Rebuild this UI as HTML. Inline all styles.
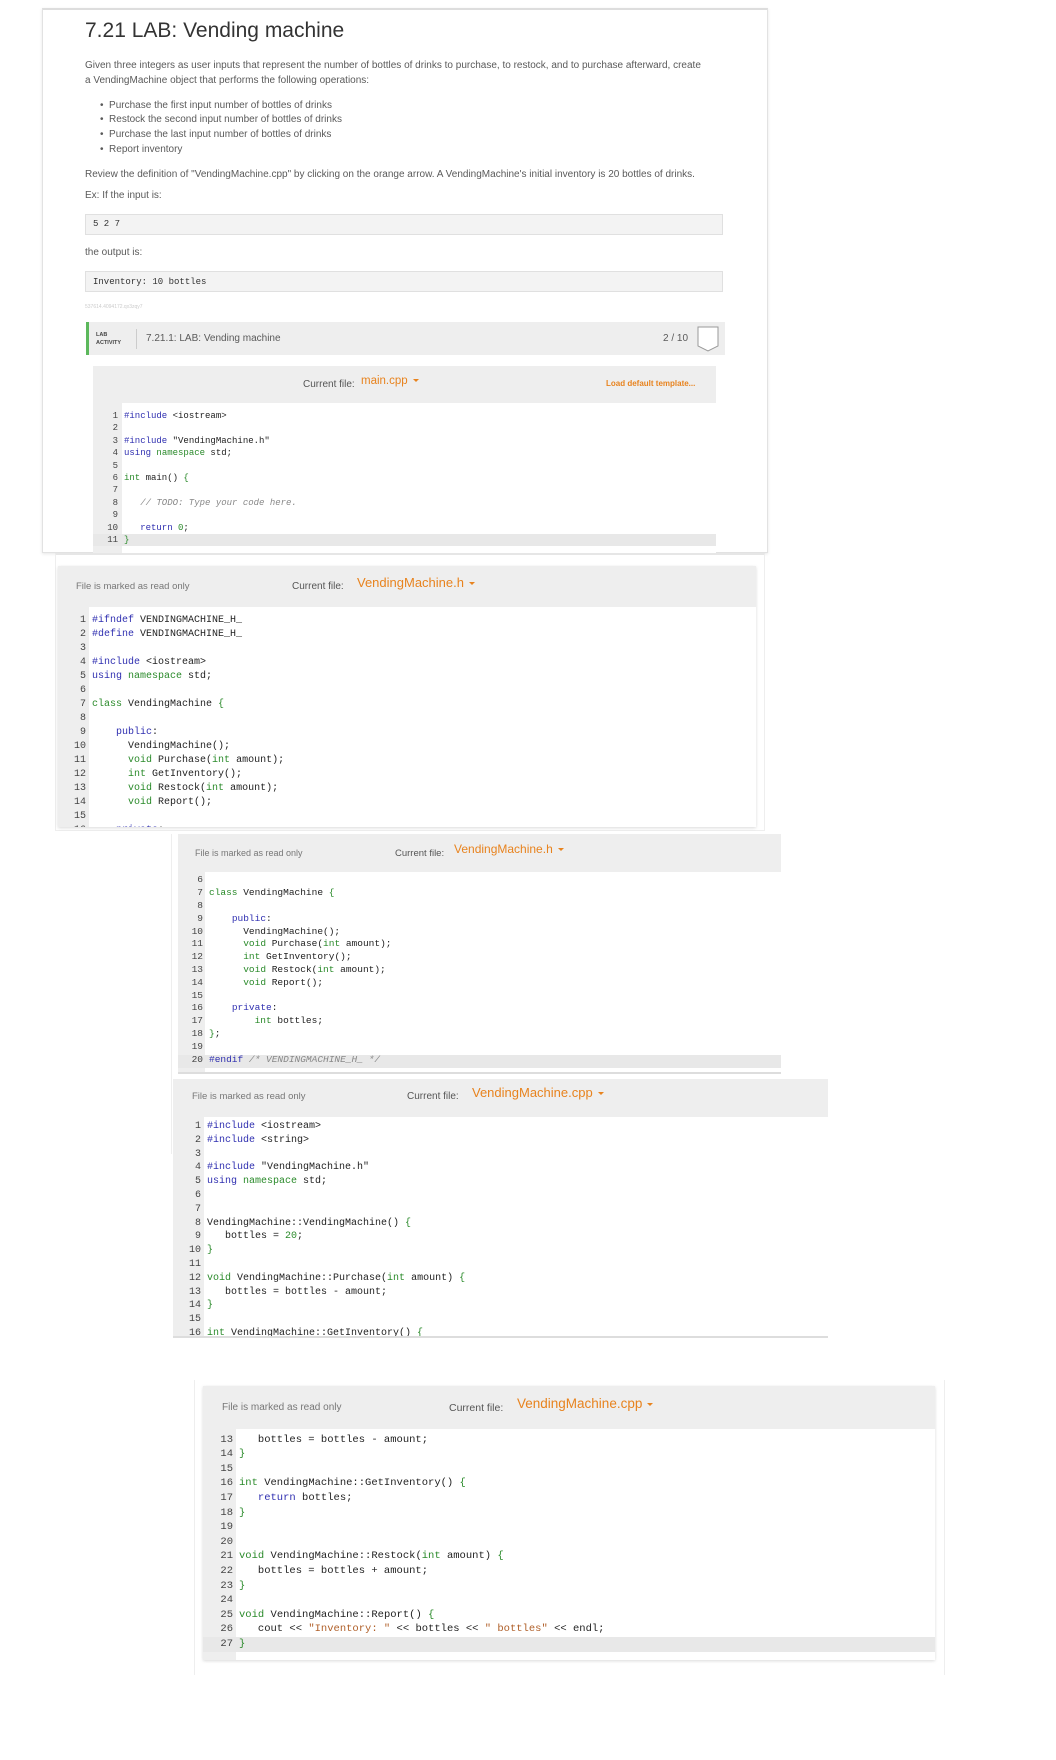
<!DOCTYPE html>
<html><head><meta charset="utf-8">
<style>
*{margin:0;padding:0;box-sizing:border-box}
body{width:1056px;height:1760px;background:#fff;position:relative;font-family:"Liberation Sans",sans-serif;color:#555;overflow:hidden}
.a{position:absolute}
.p{position:absolute;font-size:10px;white-space:nowrap;color:#5a5a5a}
.ed{position:absolute;overflow:hidden;background:#fff}
.hd{position:absolute;left:0;top:0;right:0;background:#eeeeee;z-index:2}
.hd span{position:absolute;white-space:nowrap}
.ro{font-size:9.5px;color:#777}
.cf{font-size:10px;color:#555}
.or{color:#e8831e;font-size:13px}
.car{display:inline-block;width:0;height:0;border-left:3px solid transparent;border-right:3px solid transparent;border-top:3px solid #e8831e;margin-left:5px;vertical-align:middle}
.gut{position:absolute;left:0;top:0;bottom:0;background:#eeeeee}
.ln{position:absolute;left:0;white-space:pre;font-family:"Liberation Mono",monospace;color:#222}
.num{position:absolute;left:0;text-align:right;color:#444;font-family:"Liberation Mono",monospace;white-space:pre}
.k{color:#2f2fb0}.t{color:#2a8a2a}.g{color:#2a8a2a}.s{color:#b0602a}.c{color:#888;font-style:italic}
.hl{position:absolute;left:0;right:0;background:#e8e8e8}
</style></head><body>

<!-- panel 1 -->
<div class="a" style="left:42px;top:8px;width:726px;height:545px;border:1px solid #e2e2e2;border-top:2px solid #ddd;box-shadow:0 1px 3px rgba(0,0,0,.1)"></div>
<div class="a" style="left:85px;top:19px;font-size:21px;color:#333;white-space:nowrap">7.21 LAB: Vending machine</div>
<div class="p" style="left:85px;top:60px">Given three integers as user inputs that represent the number of bottles of drinks to purchase, to restock, and to purchase afterward, create</div>
<div class="p" style="left:85px;top:75px">a VendingMachine object that performs the following operations:</div>
<div class="p" style="left:100px;top:100px">•&nbsp;&nbsp;Purchase the first input number of bottles of drinks</div>
<div class="p" style="left:100px;top:114px">•&nbsp;&nbsp;Restock the second input number of bottles of drinks</div>
<div class="p" style="left:100px;top:129px">•&nbsp;&nbsp;Purchase the last input number of bottles of drinks</div>
<div class="p" style="left:100px;top:144px">•&nbsp;&nbsp;Report inventory</div>
<div class="p" style="left:85px;top:169px">Review the definition of "VendingMachine.cpp" by clicking on the orange arrow. A VendingMachine's initial inventory is 20 bottles of drinks.</div>
<div class="p" style="left:85px;top:190px">Ex: If the input is:</div>
<div class="a" style="left:85px;top:214px;width:638px;height:21px;background:#f3f3f3;border:1px solid #e0e0e0;font-family:'Liberation Mono',monospace;font-size:9px;color:#333;padding:4px 7px">5 2 7</div>
<div class="p" style="left:85px;top:247px">the output is:</div>
<div class="a" style="left:85px;top:271px;width:638px;height:21px;background:#f3f3f3;border:1px solid #e0e0e0;font-family:'Liberation Mono',monospace;font-size:9px;color:#333;padding:5px 7px">Inventory: 10 bottles</div>
<div class="p" style="left:85px;top:304px;font-size:5px;color:#ccc">537614.4094172.qx3zqy7</div>

<div class="a" style="left:86px;top:322px;width:639px;height:33px;background:#eeeeee;border-left:3px solid #5cb85c"></div>
<div class="a" style="left:96px;top:331px;font-size:5.5px;font-weight:bold;color:#444;line-height:8px">LAB<br>ACTIVITY</div>
<div class="a" style="left:136px;top:329px;width:1px;height:20px;background:#ccc"></div>
<div class="p" style="left:146px;top:333px;font-size:10px">7.21.1: LAB: Vending machine</div>
<div class="p" style="left:663px;top:333px;font-size:10px">2 / 10</div>
<svg class="a" style="left:697px;top:326px" width="22" height="26"><path d="M1 1H21V20L11 25L1 20Z" fill="#fff" stroke="#999" stroke-width="1"/></svg>

<div class="ed" style="left:93px;top:366px;width:623px;height:187px;background:#fff">
 <div class="hd" style="height:37px">
  <span class="cf" style="left:210px;top:13px">Current file:</span>
  <span class="or" style="left:268px;top:9px;font-size:11.5px">main.cpp<i class="car"></i></span>
  <span style="left:513px;top:13px;font-size:8px;font-weight:bold;color:#e8831e">Load default template...</span>
 </div>
 <div class="gut" style="width:29px"></div>
 <div class="hl" style="top:168px;height:12.4px"></div>
 <div class="num" style="top:44px;width:25px;font-size:9px;line-height:12.4px">1
2
3
4
5
6
7
8
9
10
11</div>
 <div class="ln" style="left:31px;top:44px;font-size:9px;line-height:12.4px"><span class="k">#include</span> &lt;iostream&gt;

<span class="k">#include</span> "VendingMachine.h"
<span class="k">using</span> <span class="t">namespace</span> std;

<span class="t">int</span> main() <span class="g">{</span>

   <span class="c">// TODO: Type your code here.</span>

   <span class="k">return</span> <span class="g">0</span>;
<span class="g">}</span></div>
</div>

<!-- panel 2 -->
<div class="a" style="left:55px;top:553px;width:710px;height:278px;border:1px solid #eee;border-top:2px solid #e6e6e6;background:#fff"></div>
<div class="ed" style="left:58px;top:566px;width:698px;height:261px;box-shadow:0 1px 3px rgba(0,0,0,.15)">
 <div class="hd" style="height:41px">
  <span class="ro" style="left:18px;top:15px">File is marked as read only</span>
  <span class="cf" style="left:234px;top:15px">Current file:</span>
  <span class="or" style="left:299px;top:9px">VendingMachine.h<i class="car"></i></span>
 </div>
 <div class="gut" style="width:31px"></div>
 <div class="num" style="top:48px;width:28px;font-size:10px;line-height:14px">1
2
3
4
5
6
7
8
9
10
11
12
13
14
15
16</div>
 <div class="ln" style="left:34px;top:48px;font-size:10px;line-height:14px"><span class="k">#ifndef</span> VENDINGMACHINE_H_
<span class="k">#define</span> VENDINGMACHINE_H_

<span class="k">#include</span> &lt;iostream&gt;
<span class="k">using</span> <span class="t">namespace</span> std;

<span class="t">class</span> VendingMachine <span class="g">{</span>

    <span class="k">public</span>:
      VendingMachine();
      <span class="t">void</span> Purchase(<span class="t">int</span> amount);
      <span class="t">int</span> GetInventory();
      <span class="t">void</span> Restock(<span class="t">int</span> amount);
      <span class="t">void</span> Report();

    <span class="k">private</span>:</div>
</div>

<!-- panel 3 -->
<div class="a" style="left:171px;top:834px;width:1px;height:320px;background:#eee"></div>
<div class="ed" style="left:178px;top:834px;width:603px;height:240px;border-bottom:2px solid #ddd">
 <div class="hd" style="height:38px">
  <span class="ro" style="left:17px;top:14px;font-size:9px">File is marked as read only</span>
  <span class="cf" style="left:217px;top:14px;font-size:9.5px">Current file:</span>
  <span class="or" style="left:276px;top:8px;font-size:12px">VendingMachine.h<i class="car"></i></span>
 </div>
 <div class="gut" style="width:27px"></div>
 <div class="hl" style="top:220.8px;height:12.8px"></div>
 <div class="num" style="top:27.6px;width:25px;font-size:9.5px;line-height:12.8px">5
6
7
8
9
10
11
12
13
14
15
16
17
18
19
20</div>
 <div class="ln" style="left:31px;top:27.6px;font-size:9.5px;line-height:12.8px"><span class="k">using</span> <span class="t">namespace</span> std;

<span class="t">class</span> VendingMachine <span class="g">{</span>

    <span class="k">public</span>:
      VendingMachine();
      <span class="t">void</span> Purchase(<span class="t">int</span> amount);
      <span class="t">int</span> GetInventory();
      <span class="t">void</span> Restock(<span class="t">int</span> amount);
      <span class="t">void</span> Report();

    <span class="k">private</span>:
        <span class="t">int</span> bottles;
<span class="g">}</span>;

<span class="k">#endif</span> <span class="c">/* VENDINGMACHINE_H_ */</span></div>
</div>

<!-- panel 4 -->
<div class="ed" style="left:173px;top:1079px;width:655px;height:259px;border-bottom:2px solid #ddd">
 <div class="hd" style="height:38px">
  <span class="ro" style="left:19px;top:12px">File is marked as read only</span>
  <span class="cf" style="left:234px;top:12px">Current file:</span>
  <span class="or" style="left:299px;top:6px">VendingMachine.cpp<i class="car"></i></span>
 </div>
 <div class="gut" style="width:31px"></div>
 <div class="num" style="top:41px;width:28px;font-size:10px;line-height:13.8px">1
2
3
4
5
6
7
8
9
10
11
12
13
14
15
16</div>
 <div class="ln" style="left:34px;top:41px;font-size:10px;line-height:13.8px"><span class="k">#include</span> &lt;iostream&gt;
<span class="k">#include</span> &lt;string&gt;

<span class="k">#include</span> "VendingMachine.h"
<span class="k">using</span> <span class="t">namespace</span> std;


VendingMachine::VendingMachine() <span class="g">{</span>
   bottles = <span class="g">20</span>;
<span class="g">}</span>

<span class="t">void</span> VendingMachine::Purchase(<span class="t">int</span> amount) <span class="g">{</span>
   bottles = bottles - amount;
<span class="g">}</span>

<span class="t">int</span> VendingMachine::GetInventory() <span class="g">{</span></div>
</div>

<!-- panel 5 -->
<div class="a" style="left:194px;top:1380px;width:1px;height:295px;background:#eee"></div>
<div class="a" style="left:944px;top:1380px;width:1px;height:295px;background:#eee"></div>
<div class="ed" style="left:203px;top:1386px;width:732px;height:274px;box-shadow:0 1px 3px rgba(0,0,0,.15)">
 <div class="hd" style="height:43px">
  <span class="ro" style="left:19px;top:16px;font-size:10px">File is marked as read only</span>
  <span class="cf" style="left:246px;top:16px;font-size:10.5px">Current file:</span>
  <span class="or" style="left:314px;top:10px;font-size:13.5px">VendingMachine.cpp<i class="car"></i></span>
 </div>
 <div class="gut" style="width:33px"></div>
 <div class="hl" style="top:251.2px;height:14.6px"></div>
 <div class="num" style="top:32px;width:30px;font-size:10.5px;line-height:14.6px">12
13
14
15
16
17
18
19
20
21
22
23
24
25
26
27</div>
 <div class="ln" style="left:36px;top:32px;font-size:10.5px;line-height:14.6px"><span class="t">void</span> VendingMachine::Purchase(<span class="t">int</span> amount) <span class="g">{</span>
   bottles = bottles - amount;
<span class="g">}</span>

<span class="t">int</span> VendingMachine::GetInventory() <span class="g">{</span>
   <span class="k">return</span> bottles;
<span class="g">}</span>


<span class="t">void</span> VendingMachine::Restock(<span class="t">int</span> amount) <span class="g">{</span>
   bottles = bottles + amount;
<span class="g">}</span>

<span class="t">void</span> VendingMachine::Report() <span class="g">{</span>
   cout &lt;&lt; <span class="s">"Inventory: "</span> &lt;&lt; bottles &lt;&lt; <span class="s">" bottles"</span> &lt;&lt; endl;
<span class="g">}</span></div>
</div>
</body></html>
